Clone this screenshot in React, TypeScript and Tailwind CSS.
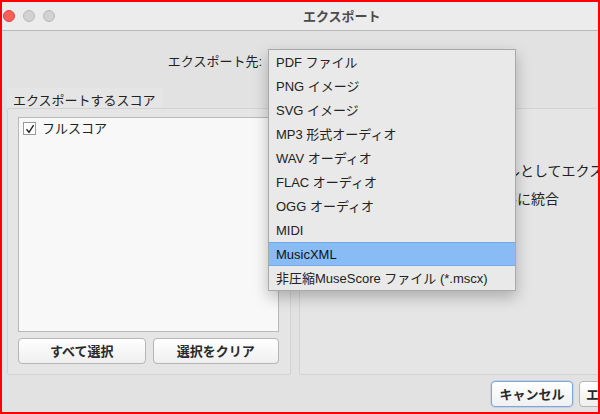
import React from "react";

const items = [
  "PDF ファイル",
  "PNG イメージ",
  "SVG イメージ",
  "MP3 形式オーディオ",
  "WAV オーディオ",
  "FLAC オーディオ",
  "OGG オーディオ",
  "MIDI",
  "MusicXML",
  "非圧縮MuseScore ファイル (*.mscx)",
];

export default function App() {
  return (
    <div className="relative w-[600px] h-[414px] overflow-hidden border-2 border-[#ff0000] bg-[#e2e2e2] font-['Liberation_Sans','Noto_Sans_CJK_JP',sans-serif] text-[13px] text-[#222]">
      {/* Title bar */}
      <div className="flex h-[29px] items-center border-b border-[#b8b8b8] bg-[#ececec]">
        <div className="flex items-center gap-[8px] pl-[1px]">
          <div className="h-[12px] w-[12px] rounded-full border border-[#e0443e] bg-[#fc5f57]" />
          <div className="h-[12px] w-[12px] rounded-full border border-[#b9b9b9] bg-[#d1d1d1]" />
          <div className="h-[12px] w-[12px] rounded-full border border-[#b9b9b9] bg-[#d1d1d1]" />
        </div>
        <div className="ml-[248px] font-semibold text-[#4b4b4b] leading-none">エクスポート</div>
      </div>

      {/* Content */}
      <div className="flex flex-col px-[5px]">
        <div className="mt-[19px] flex h-[22px] items-center">
          <div className="w-[255px] text-right leading-none">エクスポート先:</div>
        </div>

        <div className="mt-[16px] flex h-[20px] w-[156px] items-center bg-[#e5e5e5] pl-[6px] pt-[5px] leading-none">
          エクスポートするスコア
        </div>

        <div className="flex h-[267px] gap-[8px]">
          {/* Left group */}
          <div className="flex w-[284px] shrink-0 flex-col rounded-[2px] border border-[#d2d2d2] bg-[#e5e5e5] pl-[10px] pr-[11px] pt-[8px]">
            <div className="h-[215px] border border-[#b9b9b9] bg-[#f8f8f8] pl-[4px] pt-[4px]">
              <div className="flex items-center gap-[6px]">
                <div className="flex h-[13px] w-[13px] items-center justify-center border border-[#9a9a9a] bg-white">
                  <svg width="10" height="10" viewBox="0 0 10 10">
                    <path d="M1.5 5.2 L4 8.3 L8.6 1.2" fill="none" stroke="#222" strokeWidth="1.4" />
                  </svg>
                </div>
                <span className="leading-none">フルスコア</span>
              </div>
            </div>
            <div className="mt-[6px] flex gap-[7px]">
              <button className="h-[26px] w-[128px] rounded-[4px] border border-[#b6b6b6] bg-gradient-to-b from-[#ffffff] to-[#efefef] font-semibold text-[#2a2a2a] leading-none">
                すべて選択
              </button>
              <button className="h-[26px] w-[127px] rounded-[4px] border border-[#b6b6b6] bg-gradient-to-b from-[#ffffff] to-[#efefef] font-semibold text-[#2a2a2a] leading-none">
                選択をクリア
              </button>
            </div>
          </div>

          {/* Right group */}
          <div className="flex w-[330px] shrink-0 flex-col rounded-[2px] border border-[#d2d2d2] bg-[#e5e5e5] pl-[2px] pt-[53px] text-[14px]">
            <div className="flex h-[18px] items-center gap-[6px] whitespace-nowrap">
              <div className="h-[13px] w-[13px] rounded-full border border-[#9a9a9a] bg-white" />
              <span className="leading-none">選択したパートを個別のファイルとしてエクスポート</span>
            </div>
            <div className="mt-[10px] flex h-[18px] items-center gap-[6px] whitespace-nowrap">
              <div className="h-[13px] w-[13px] rounded-full border border-[#9a9a9a] bg-white" />
              <span className="leading-none">選択したパートを単一ファイルに統合</span>
            </div>
          </div>
        </div>

        {/* Bottom buttons */}
        <div className="mt-[6px] flex gap-[6px] pl-[484px]">
          <button className="h-[26px] w-[82px] shrink-0 rounded-[4px] border border-[#7ea7d8] bg-gradient-to-b from-[#ffffff] to-[#eef0f3] font-semibold text-[#2a2a2a] leading-none shadow-[0_0_0_1px_rgba(120,165,220,0.25)]">
            キャンセル
          </button>
          <button className="h-[26px] w-[100px] shrink-0 rounded-[4px] border border-[#b6b6b6] bg-gradient-to-b from-[#ffffff] to-[#efefef] pl-[6px] text-left font-semibold text-[#2a2a2a] leading-none">
            エクスポート…
          </button>
        </div>
      </div>

      {/* Popup menu */}
      <div className="absolute left-[266px] top-[47px] w-[248px] border border-[#a9a9a9] bg-[#e9e9e9] shadow-[0_6px_14px_rgba(0,0,0,0.25)]">
        {items.map((t) => (
          <div
            key={t}
            className={
              t === "MusicXML"
                ? "flex h-[24px] items-center border-y border-[#74a8e6] bg-[#89bbf4] pl-[7px] leading-none text-[#111]"
                : "flex h-[24px] items-center pl-[7px] leading-none text-[#222]"
            }
          >
            {t}
          </div>
        ))}
      </div>
    </div>
  );
}
